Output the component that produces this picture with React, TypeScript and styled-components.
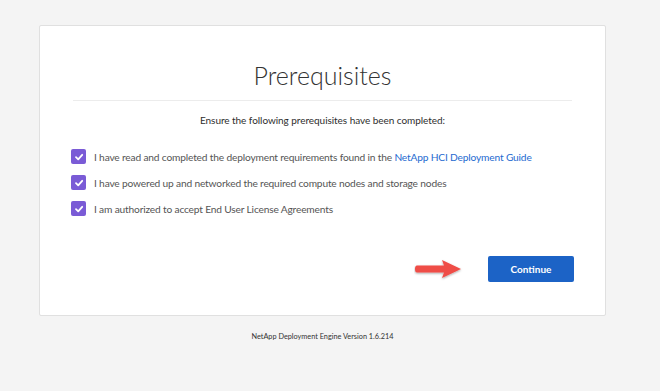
import React from 'react';
import styled, { createGlobalStyle } from 'styled-components';

const GlobalStyle = createGlobalStyle`
  html, body {
    margin: 0;
    padding: 0;
    background: #f4f4f4;
    font-family: Lato, "Open Sans", sans-serif;
  }
`;

const Page = styled.div`
  width: 660px;
  height: 391px;
  padding: 25px 0 0 39px;
  box-sizing: border-box;
  display: flex;
  flex-direction: column;
`;

const Card = styled.div`
  width: 567px;
  height: 291px;
  box-sizing: border-box;
  background: #fff;
  border: 1px solid #e0e0e0;
  border-radius: 2px;
  padding: 34px 33px 0 33px;
  display: flex;
  flex-direction: column;
`;

const Title = styled.h1`
  margin: 0;
  text-align: center;
  font-weight: 300;
  font-size: 25px;
  line-height: 30px;
  color: #333;
  padding-bottom: 10px;
  border-bottom: 1px solid #ececec;
`;

const Subtitle = styled.p`
  margin: 12px 0 0;
  text-align: center;
  font-size: 10px;
  line-height: 14px;
  color: #2e2e2e;
  letter-spacing: -0.05px;
`;

const List = styled.div`
  margin: 22px 0 0 -2px;
  display: flex;
  flex-direction: column;
  gap: 11px;
`;

const Row = styled.label`
  display: flex;
  align-items: center;
  gap: 8px;
  height: 15px;
  font-size: 10.2px;
  letter-spacing: -0.17px;
  color: #555;
`;

const Box = styled.span`
  width: 15px;
  height: 15px;
  border-radius: 2px;
  background: #7a5bd6;
  display: flex;
  align-items: center;
  justify-content: center;
  flex-shrink: 0;
`;

const Link = styled.a`
  color: #1e6ad0;
  text-decoration: none;
`;

const Actions = styled.div`
  margin: 40px -2px 0 0;
  display: flex;
  justify-content: flex-end;
  align-items: center;
  gap: 24px;
`;

const Button = styled.button`
  width: 86px;
  height: 26px;
  border: none;
  border-radius: 2px;
  background: #1c63c6;
  color: #fff;
  font-family: inherit;
  font-weight: 700;
  font-size: 10px;
`;

const Footer = styled.div`
  margin-top: 16px;
  width: 567px;
  text-align: center;
  font-size: 7.3px;
  color: #333;
`;

const Check = () => (
  <svg width="10" height="10" viewBox="0 0 10 10">
    <path d="M2 5.2 L4.2 7.3 L8.2 2.8" fill="none" stroke="#fff" strokeWidth="1.8" strokeLinecap="round" strokeLinejoin="round" />
  </svg>
);

const Arrow = () => (
  <svg width="50" height="24" viewBox="0 0 50 24">
    <defs>
      <filter id="sh" x="-20%" y="-30%" width="140%" height="160%">
        <feDropShadow dx="0" dy="1" stdDeviation="0.8" floodColor="#000" floodOpacity="0.35" />
      </filter>
    </defs>
    <path d="M3 8.5 H30 L28 3 L47 12 L28 21 L30 15.5 H3 Q1 15.5 1 12 Q1 8.5 3 8.5 Z" fill="#ef4d47" filter="url(#sh)" />
  </svg>
);

const items = [
  <>I have read and completed the deployment requirements found in the <Link href="#">NetApp HCI Deployment Guide</Link></>,
  <>I have powered up and networked the required compute nodes and storage nodes</>,
  <>I am authorized to accept End User License Agreements</>,
];

export default function App() {
  return (
    <Page>
      <GlobalStyle />
      <Card>
        <Title>Prerequisites</Title>
        <Subtitle>Ensure the following prerequisites have been completed:</Subtitle>
        <List>
          {items.map((it, i) => (
            <Row key={i}>
              <Box><Check /></Box>
              <span>{it}</span>
            </Row>
          ))}
        </List>
        <Actions>
          <Arrow />
          <Button>Continue</Button>
        </Actions>
      </Card>
      <Footer>NetApp Deployment Engine Version 1.6.214</Footer>
    </Page>
  );
}
